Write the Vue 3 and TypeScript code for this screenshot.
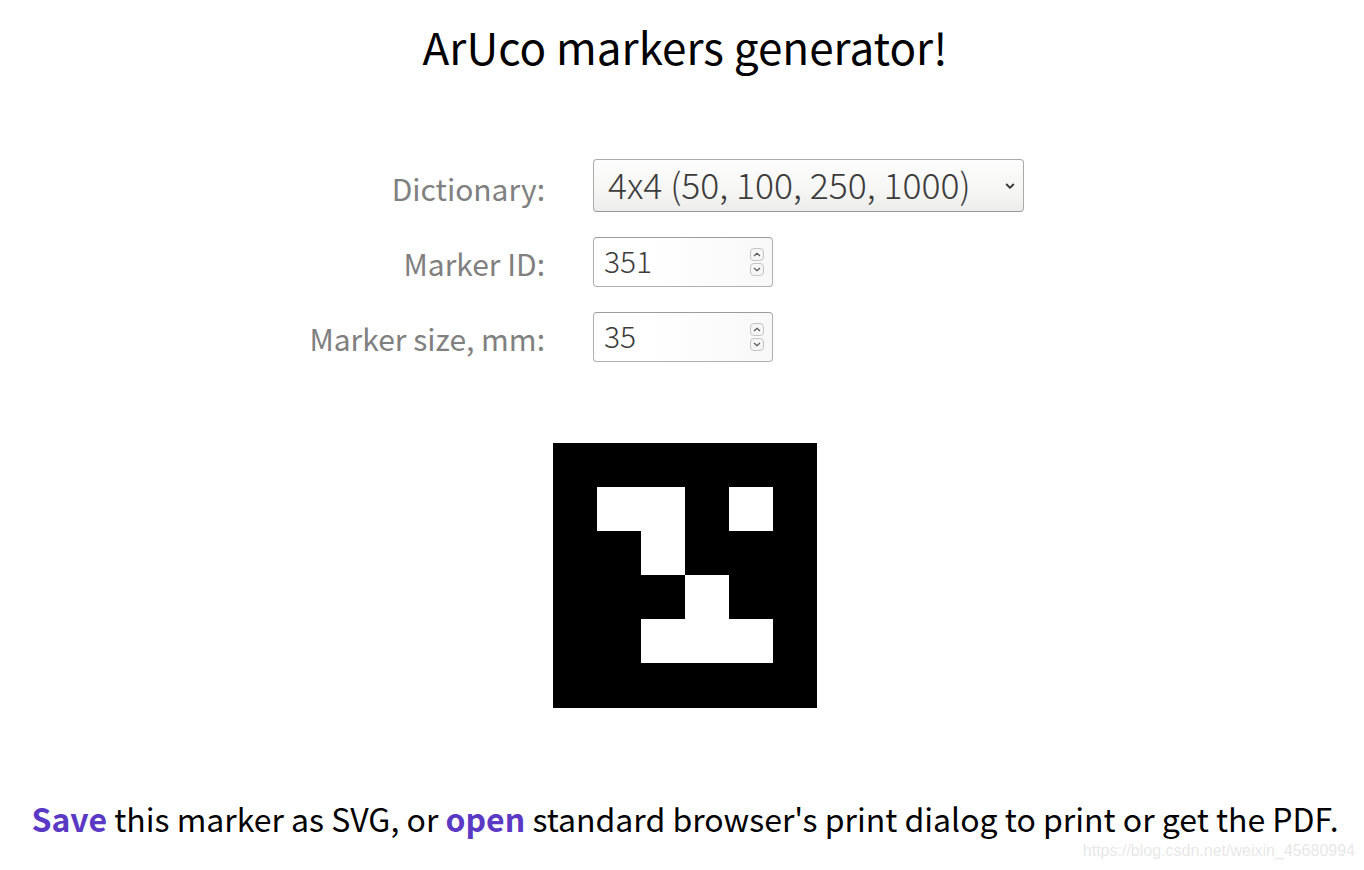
<script setup lang="ts">
import { ref } from 'vue'

const dict = ref('4x4 (50, 100, 250, 1000)')
const markerId = ref(351)
const markerSize = ref(35)
const grid: number[][] = [
  [0, 0, 0, 0, 0, 0],
  [0, 1, 1, 0, 1, 0],
  [0, 0, 1, 0, 0, 0],
  [0, 0, 0, 1, 0, 0],
  [0, 0, 1, 1, 1, 0],
  [0, 0, 0, 0, 0, 0],
]
const fields = [
  { label: 'Marker ID:', model: markerId },
  { label: 'Marker size, mm:', model: markerSize },
]
</script>

<template>
  <main class="page">
    <h1 class="title">ArUco markers generator!</h1>
    <form class="form" @submit.prevent>
      <label class="label label-select">Dictionary:</label>
      <div class="select" role="combobox" aria-expanded="false" tabindex="0">
        <span>{{ dict }}</span>
        <svg class="chevron" width="10" height="6" viewBox="0 0 10 6">
          <path d="M1.2 1 5 4.8 8.8 1" fill="none" stroke="#333" stroke-width="1.8" />
        </svg>
      </div>
      <template v-for="f in fields" :key="f.label">
        <label class="label">{{ f.label }}</label>
        <div class="num-wrap">
          <input v-model="f.model.value" type="number" class="num" />
          <span class="spin">
            <span class="spin-btn">
              <svg width="8" height="5" viewBox="0 0 8 5"><path d="M1 4 4 1.2 7 4" fill="none" stroke="#555" stroke-width="1.2" /></svg>
            </span>
            <span class="spin-btn">
              <svg width="8" height="5" viewBox="0 0 8 5"><path d="M1 1 4 3.8 7 1" fill="none" stroke="#555" stroke-width="1.2" /></svg>
            </span>
          </span>
        </div>
      </template>
    </form>
    <div class="marker">
      <template v-for="(row, r) in grid" :key="r">
        <span v-for="(c, i) in row" :key="i" :class="c ? 'cell-w' : 'cell-b'"></span>
      </template>
    </div>
    <p class="note">
      <a class="link" href="#">Save</a> this marker as SVG, or <a class="link" href="#">open</a> standard browser's print dialog to print or get the PDF.
    </p>
    <span class="watermark">https://blog.csdn.net/weixin_45680994</span>
  </main>
</template>

<style scoped>
.page {
  position: relative;
  width: 1364px;
  height: 870px;
  overflow: hidden;
  background: #fff;
  color: #000;
  font-family: "Noto Sans CJK JP", "Noto Sans", sans-serif;
  display: flex;
  flex-direction: column;
  align-items: center;
}
.title {
  margin: 19px 0 0 6px;
  font-size: 44px;
  font-weight: 400;
  line-height: 54px;
}
.form {
  margin-top: 86px;
  align-self: flex-start;
  margin-left: 300px;
  display: grid;
  grid-template-columns: 245px auto;
  column-gap: 48px;
  row-gap: 25px;
  align-items: start;
  justify-content: start;
}
.label {
  text-align: right;
  white-space: nowrap;
  font-size: 30px;
  line-height: 40px;
  color: #808080;
  padding-top: 6px;
}
.label-select {
  padding-top: 9px;
}
.select {
  box-sizing: border-box;
  width: 431px;
  height: 53px;
  display: flex;
  align-items: center;
  justify-content: space-between;
  padding: 0 8px 3px 14px;
  border: 1px solid #aaa;
  border-bottom-color: #999;
  border-radius: 4px;
  background: linear-gradient(to bottom, #fdfdfd, #f6f6f5 60%, #ececeb);
  color: #3c3c3c;
  font-size: 35.5px;
  font-weight: 300;
  line-height: 40px;
  white-space: nowrap;
  outline: none;
}
.chevron {
  flex: none;
  margin-top: 3px;
}
.num-wrap {
  position: relative;
  width: 180px;
  height: 50px;
}
.num {
  appearance: textfield;
  box-sizing: border-box;
  width: 100%;
  height: 100%;
  margin: 0;
  padding: 0 0 5px 10px;
  border: 1px solid #b0b0b0;
  border-top-color: #9c9c9c;
  border-radius: 4px;
  background: linear-gradient(to right, #fff, #fff 30%, #f8f8f8);
  color: #3c3c3c;
  font: inherit;
  font-size: 30px;
  font-weight: 300;
  outline: none;
}
.num::-webkit-inner-spin-button,
.num::-webkit-outer-spin-button {
  -webkit-appearance: none;
  margin: 0;
}
.spin {
  position: absolute;
  right: 9px;
  top: 11px;
  display: flex;
  flex-direction: column;
  gap: 2px;
}
.spin-btn {
  box-sizing: border-box;
  width: 14px;
  height: 13px;
  border: 1px solid #c4c4c4;
  border-radius: 4px;
  background: #f6f6f6;
  display: flex;
  align-items: center;
  justify-content: center;
}
.marker {
  margin-top: 81px;
  width: 264px;
  height: 265px;
  display: grid;
  grid-template-columns: repeat(6, 44px);
  grid-template-rows: repeat(6, 44px);
  background: #000;
  margin-left: 6px;
}
.cell-w {
  background: #fff;
}
.cell-b {
  background: #000;
}
.note {
  margin: 89px 0 0 6px;
  font-size: 32px;
  line-height: 42px;
  white-space: nowrap;
}
.link {
  color: #5a39c4;
  font-weight: 700;
  text-decoration: none;
}
.watermark {
  position: absolute;
  right: 9px;
  top: 841px;
  font-family: "Liberation Sans", Arial, sans-serif;
  font-size: 16px;
  line-height: 20px;
  color: rgba(170, 170, 170, 0.3);
}
</style>
